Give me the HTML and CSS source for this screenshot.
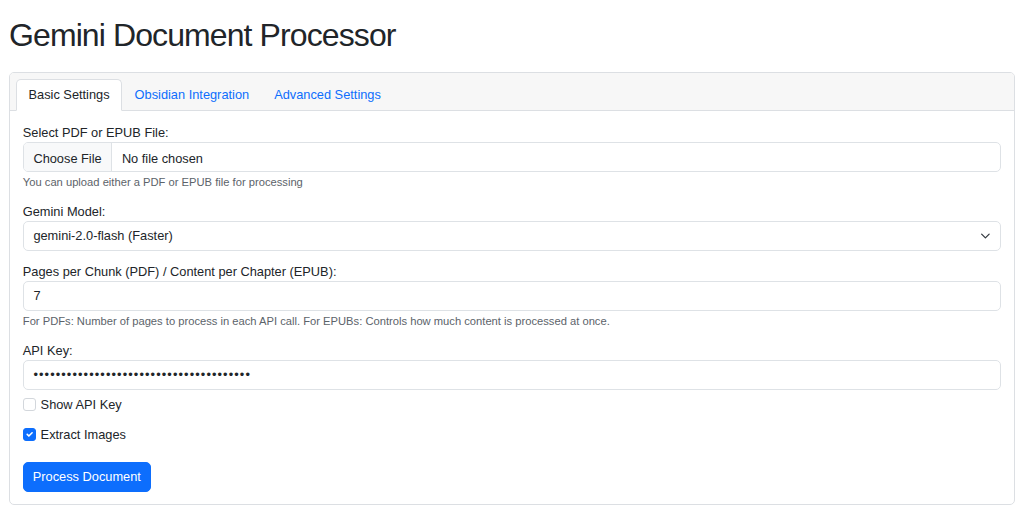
FILE: index.html
```html
<!DOCTYPE html>
<html lang="en">
<head>
  <meta charset="UTF-8" />
  <meta name="viewport" content="width=device-width, initial-scale=1.0"/>
  <title>Gemini Document Processor</title>
  <link rel="stylesheet" href="styles.css">
</head>
<body>
  <div class="container">
    <h1 class="title">Gemini Document Processor</h1>

    <div class="card">
      <div class="card-header">
        <ul class="tabs">
          <li><a class="tab active" href="#basic">Basic Settings</a></li>
          <li><a class="tab" href="#obsidian">Obsidian Integration</a></li>
          <li><a class="tab" href="#advanced">Advanced Settings</a></li>
        </ul>
      </div>

      <div class="card-body">
        <form id="processForm">
          <!-- File to process -->
          <div class="field">
            <label class="field-label" for="fileInput">Select PDF or EPUB File:</label>
            <input type="file" class="control file-control" id="fileInput" accept=".pdf,.epub">
            <div class="hint">You can upload either a PDF or EPUB file for processing</div>
          </div>

          <div class="field">
            <label class="field-label" for="modelSelect">Gemini Model:</label>
            <div class="select-wrap">
              <select class="control select-control" id="modelSelect">
                <option selected>gemini-2.0-flash (Faster)</option>
                <option>gemini-2.0-pro (Better quality)</option>
              </select>
              <svg class="chevron" viewBox="0 0 16 16" aria-hidden="true">
                <path d="M2 5l6 6 6-6" fill="none" stroke="#343a40" stroke-width="2" stroke-linecap="round" stroke-linejoin="round"/>
              </svg>
            </div>
          </div>

          <div class="field">
            <label class="field-label" for="chunkSize">Pages per Chunk (PDF) / Content per Chapter (EPUB):</label>
            <input type="number" class="control" id="chunkSize" value="7" min="1">
            <div class="hint">For PDFs: Number of pages to process in each API call. For EPUBs: Controls how much content is processed at once.</div>
          </div>

          <div class="field field-tight">
            <label class="field-label" for="apiKey">API Key:</label>
            <input type="password" class="control password-control" id="apiKey" value="AIzaSyD4x9Qk2mLr7TbVw3NcPz8HfJu1sEo6GaY">
          </div>

          <label class="check check-first">
            <input type="checkbox" id="showKey">
            <span class="check-box"></span>
            Show API Key
          </label>

          <label class="check check-last">
            <input type="checkbox" id="extractImages" checked>
            <span class="check-box">
              <svg viewBox="0 0 20 20" aria-hidden="true">
                <path d="M6 10l3 3 6-6" fill="none" stroke="#fff" stroke-width="3" stroke-linecap="round" stroke-linejoin="round"/>
              </svg>
            </span>
            Extract Images
          </label>

          <button type="submit" class="btn-primary">Process Document</button>
        </form>
      </div>
    </div>
  </div>

  <script>
    const apiKey = document.getElementById('apiKey');
    document.getElementById('showKey').addEventListener('change', e => {
      apiKey.type = e.target.checked ? 'text' : 'password';
    });
    document.getElementById('processForm').addEventListener('submit', e => e.preventDefault());
  </script>
</body>
</html>
```

FILE: styles.css
```css
body {
  margin: 0;
  font-family: "Liberation Sans", Arial, sans-serif;
  font-size: 12.8px;
  line-height: 1.5;
  color: #212529;
  background-color: #fff;
}
.container {
  padding: 0 9px;
}
.title {
  margin: 16px 0 18px;
  font-size: 32px;
  font-weight: 500;
  line-height: 1.2;
  letter-spacing: -0.9px;
}

.card {
  border: 1px solid #dcdfe3;
  border-radius: 5px;
  overflow: hidden;
}
.card-header {
  padding: 6px 12.8px 0 6px;
  background-color: #f7f7f7;
  border-bottom: 1px solid #dcdfe3;
}
.tabs {
  display: flex;
  list-style: none;
  margin: 0 0 -1px;
  padding: 0;
}
.tab {
  display: block;
  padding: 5px 11.5px;
  border: 1px solid transparent;
  border-radius: 5px 5px 0 0;
  color: #0d6efd;
  text-decoration: none;
}
.tab.active {
  color: #212529;
  background-color: #fff;
  border-color: #dcdfe3 #dcdfe3 #fff;
}

.card-body {
  padding: 12.5px 12.8px 12.8px;
}
.field {
  margin-bottom: 11px;
}
.field-tight {
  margin-bottom: 0;
}
.field-label {
  display: block;
  line-height: 19px;
}
.control {
  display: block;
  box-sizing: border-box;
  width: 100%;
  height: 30px;
  margin: 0;
  padding: 4.5px 9.6px;
  font-family: inherit;
  font-size: 12.8px;
  line-height: 19.2px;
  color: #212529;
  background-color: #fff;
  border: 1px solid #dee2e6;
  border-radius: 5px;
  appearance: none;
  outline: none;
}
.file-control {
  overflow: hidden;
}
.file-control::file-selector-button {
  height: 30px;
  padding: 4.5px 9.6px;
  margin: -4.5px 9.6px -4.5px -9.6px;
  font-family: inherit;
  font-size: 12.8px;
  color: #212529;
  background-color: #f8f9fa;
  border: 0 solid #dee2e6;
  border-right-width: 1px;
  border-radius: 0;
}
.select-wrap {
  position: relative;
}
.select-control {
  padding-right: 30px;
}
.chevron {
  position: absolute;
  right: 9.6px;
  top: 10px;
  width: 12.8px;
  height: 10px;
  pointer-events: none;
}
.password-control {
  letter-spacing: 1.1px;
}
.hint {
  margin-top: 2px;
  font-size: 11.2px;
  line-height: 1.5;
  color: #5c636a;
}

.check {
  display: flex;
  align-items: center;
  gap: 5px;
  line-height: 19px;
  cursor: pointer;
}
.check input {
  display: none;
}
.check-box {
  display: flex;
  box-sizing: border-box;
  width: 12.8px;
  height: 12.8px;
  border: 1px solid #d3d7dc;
  border-radius: 3px;
  background-color: #fff;
}
.check input:checked + .check-box {
  background-color: #0d6efd;
  border-color: #0d6efd;
}
.check-box svg {
  width: 100%;
  height: 100%;
}
.check-first {
  margin-top: 5.5px;
  margin-bottom: 11px;
}
.check-last {
  margin-bottom: 17.5px;
}

.btn-primary {
  display: inline-block;
  height: 30px;
  padding: 4.5px 9px;
  font-family: inherit;
  font-size: 12.8px;
  line-height: 19.2px;
  color: #fff;
  background-color: #0d6efd;
  border: 1px solid #0d6efd;
  border-radius: 5px;
  cursor: pointer;
}
```
